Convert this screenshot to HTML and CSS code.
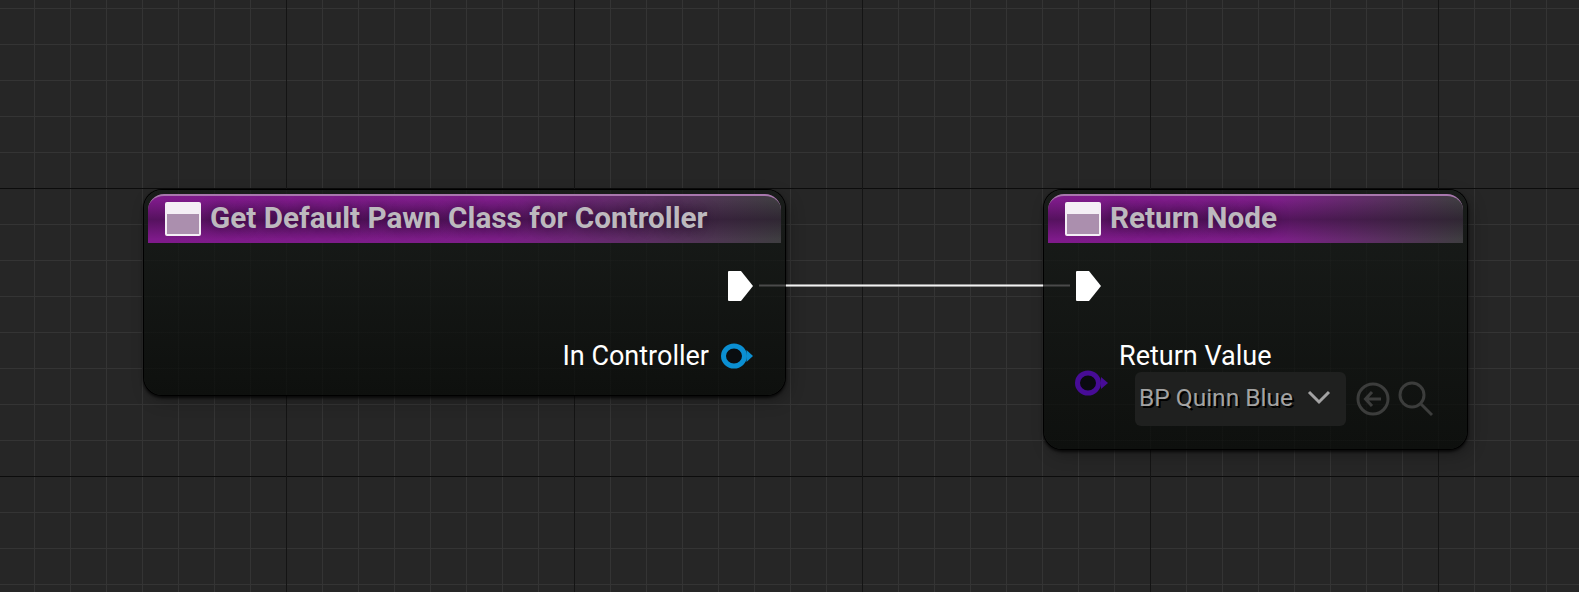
FILE: index.html
```html
<!DOCTYPE html>
<html lang="en">
<head>
    <meta charset="UTF-8">
    <title>Get Default Pawn Class for Controller</title>
    <link rel="stylesheet" href="styles.css">
</head>
<body>
    <div class="graph">

        <div class="node node-get">
            <div class="node-header">
                <span class="func-icon"></span>
                <span class="node-title">Get Default Pawn Class for Controller</span>
            </div>
            <div class="node-body outputs">
                <div class="pin-row exec-row">
                    <svg class="exec-pin" width="27" height="32" viewBox="0 0 27 32"><path d="M2 1H14L26 16L14 31H2Q1 31 1 30V2Q1 1 2 1Z" fill="#fff"/></svg>
                </div>
                <div class="pin-row">
                    <span class="pin-label">In Controller</span>
                    <svg class="data-pin" width="33" height="26" viewBox="0 0 33 26"><ellipse cx="13" cy="13" rx="10.500" ry="10" fill="#0a0d10" stroke="#0b8fd2" stroke-width="5"/><path d="M25.500 7L32 13L25.500 19Z" fill="#0b8fd2"/></svg>
                </div>
            </div>
        </div>

        <div class="node node-return">
            <div class="node-header">
                <span class="func-icon"></span>
                <span class="node-title">Return Node</span>
            </div>
            <div class="node-body inputs">
                <div class="pin-row exec-row">
                    <svg class="exec-pin" width="27" height="32" viewBox="0 0 27 32"><path d="M2 1H14L26 16L14 31H2Q1 31 1 30V2Q1 1 2 1Z" fill="#fff"/></svg>
                </div>
                <div class="pin-row">
                    <svg class="data-pin" width="33" height="26" viewBox="0 0 33 26"><ellipse cx="13" cy="13" rx="10.500" ry="10" fill="#0a0a10" stroke="#470c96" stroke-width="5"/><path d="M26 7L33 13L26 19Z" fill="#470c96"/></svg>
                    <div class="pin-value">
                        <span class="pin-label">Return Value</span>
                        <div class="value-row">
                            <div class="combo">
                                <span class="combo-text">BP Quinn Blue</span>
                                <svg width="24" height="15" viewBox="0 0 24 15"><path d="M2 2L12 12L22 2" fill="none" stroke="#a3a3a3" stroke-width="3"/></svg>
                            </div>
                            <svg class="tool-icon" width="34" height="34" viewBox="0 0 34 34"><circle cx="17" cy="17" r="15" fill="none" stroke="#3c3d3c" stroke-width="3"/><path d="M25 17H10M16 10L9.500 17L16 24" fill="none" stroke="#3c3d3c" stroke-width="3"/></svg>
                            <svg class="tool-icon" width="36" height="36" viewBox="0 0 36 36"><circle cx="15" cy="14" r="12" fill="none" stroke="#3c3d3c" stroke-width="3"/><path d="M24 23L35 34" fill="none" stroke="#3c3d3c" stroke-width="3"/></svg>
                        </div>
                    </div>
                </div>
            </div>
        </div>

        <!-- wire between the two exec pins, dim where it crosses the nodes -->
        <svg class="wire" width="1579" height="592" viewBox="0 0 1579 592">
            <line x1="759" y1="285.500" x2="1070" y2="285.500" stroke="#4a4a4a" stroke-width="2"/>
            <line x1="786" y1="285.500" x2="1043" y2="285.500" stroke="#f2f2f2" stroke-width="2"/>
        </svg>

    </div>
</body>
</html>
```

FILE: styles.css
```css
html, body {
    margin: 0;
    padding: 0;
}
.graph {
    position: relative;
    width: 1579px;
    height: 592px;
    overflow: hidden;
    background-color: #262626;
    background-image:
        repeating-linear-gradient(90deg, transparent 0 286px, #141414 286px 287px, transparent 287px 288px),
        repeating-linear-gradient(180deg, transparent 0 188px, #0c0c0c 188px 189px, transparent 189px 288px),
        repeating-linear-gradient(90deg, transparent 0 34px, #343434 34px 35px, transparent 35px 36px),
        repeating-linear-gradient(180deg, transparent 0 8px, #343434 8px 9px, transparent 9px 36px);
    font-family: Roboto, "Liberation Sans", sans-serif;
    color: #fff;
}
.wire {
    position: absolute;
    left: 0;
    top: 0;
}
.node {
    position: absolute;
    top: 190px;
    box-sizing: border-box;
    padding: 4px 4px 0;
    display: flex;
    flex-direction: column;
    border-radius: 18px;
    background:
        repeating-linear-gradient(90deg, transparent 0 34px, rgba(255, 255, 255, 0.015) 34px 35px, transparent 35px 36px),
        repeating-linear-gradient(180deg, transparent 0 34px, rgba(255, 255, 255, 0.015) 34px 35px, transparent 35px 36px),
        linear-gradient(#191c1a, #0e100e);
    box-shadow: 0 0 0 1px #000, 0 2px 3px 1px rgba(0, 0, 0, 0.75), 4px 6px 16px rgba(0, 0, 0, 0.25);
}
.node-get {
    left: 144px;
    width: 641px;
    height: 205px;
}
.node-return {
    left: 1044px;
    width: 423px;
    height: 259px;
}
.node-header {
    box-sizing: border-box;
    height: 49px;
    padding: 6px 0 0 17px;
    display: flex;
    align-items: flex-start;
    gap: 9px;
    overflow: hidden;
    border-radius: 16px 16px 0 0;
    border-top: 2px solid #a877ad;
    background:
        linear-gradient(180deg, rgba(25, 5, 30, 0) 8%, rgba(25, 5, 30, 0.4) 50%, rgba(25, 5, 30, 0) 92%),
        linear-gradient(90deg, #7e1a8a 0%, #7c1e88 55%, #3e3d40 100%);
}
.func-icon {
    box-sizing: border-box;
    width: 36px;
    height: 34px;
    border: 2px solid #f4eff5;
    border-top-width: 12px;
    border-radius: 2px;
    background: #ab8fae;
}
.node-title {
    margin-top: -1px;
    font-size: 29.7px;
    font-weight: 700;
    line-height: 34px;
    color: #bdb9be;
    text-shadow: 0 0 12px rgba(30, 5, 35, 0.6);
}
.node-body {
    flex: 1;
    display: flex;
    flex-direction: column;
    padding-top: 27px;
}
.outputs {
    align-items: flex-end;
    padding-right: 27px;
}
.inputs {
    padding-left: 27px;
}
.pin-row {
    display: flex;
    align-items: center;
}
.exec-row {
    height: 32px;
}
.exec-pin {
    filter: blur(0.6px);
}
.data-pin {
    filter: blur(0.5px);
}
.outputs .exec-row {
    margin-bottom: 38px;
}
.inputs .exec-row {
    margin-bottom: 38px;
}
.pin-label {
    display: block;
    font-size: 27px;
    line-height: 32px;
}
.outputs .pin-label {
    margin-right: 12px;
}
.pin-value {
    margin-left: 11px;
}
.value-row {
    display: flex;
    align-items: center;
    gap: 7px;
    margin-left: 16px;
}
.combo {
    box-sizing: border-box;
    width: 211px;
    height: 54px;
    margin-right: 3px;
    padding: 0 15px 3px 4px;
    display: flex;
    align-items: center;
    justify-content: space-between;
    border-radius: 6px;
    background: #1f201f;
}
.combo-text {
    font-size: 24.500px;
    color: #a3a3a3;
    text-shadow: 2px 2px 0 #000;
}
.tool-icon {
    flex: none;
}
```
